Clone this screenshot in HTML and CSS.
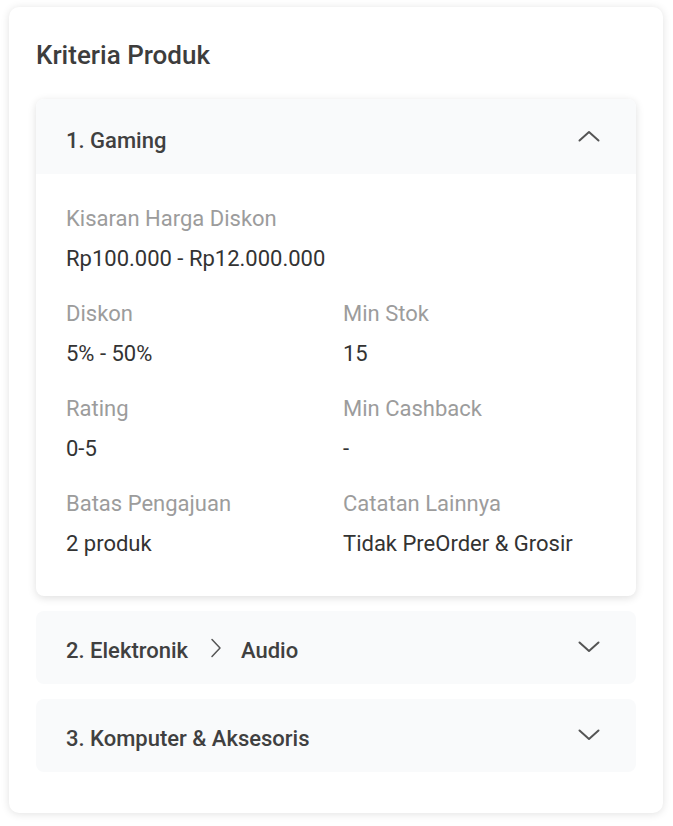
FILE: index.html
```html
<!DOCTYPE html>
<html lang="id">
<head>
  <meta charset="UTF-8" />
  <meta name="viewport" content="width=device-width, initial-scale=1" />
  <title>Kriteria Produk</title>
  <link rel="stylesheet" href="styles.css">
</head>
<body>
  <div class="kartu">
    <h2 class="judul">Kriteria Produk</h2>

    <div class="daftar">
      <div class="kategori terbuka">
        <div class="kepala">
          <span class="nama">1. Gaming</span>
          <svg class="panah" width="22" height="12" viewBox="0 0 22 12"><path d="M1.5 10.5 L11 2 L20.5 10.5" fill="none" stroke="#555" stroke-width="2" stroke-linecap="round" stroke-linejoin="round"/></svg>
        </div>
        <div class="isi">
          <div class="item penuh">
            <div class="label">Kisaran Harga Diskon</div>
            <div class="nilai">Rp100.000 - Rp12.000.000</div>
          </div>
          <div class="item">
            <div class="label">Diskon</div>
            <div class="nilai">5% - 50%</div>
          </div>
          <div class="item">
            <div class="label">Min Stok</div>
            <div class="nilai">15</div>
          </div>
          <div class="item">
            <div class="label">Rating</div>
            <div class="nilai">0-5</div>
          </div>
          <div class="item">
            <div class="label">Min Cashback</div>
            <div class="nilai">-</div>
          </div>
          <div class="item">
            <div class="label">Batas Pengajuan</div>
            <div class="nilai">2 produk</div>
          </div>
          <div class="item">
            <div class="label">Catatan Lainnya</div>
            <div class="nilai">Tidak PreOrder &amp; Grosir</div>
          </div>
        </div>
      </div>

      <div class="kategori">
        <div class="kepala">
          <span class="nama">2. Elektronik
            <svg class="pemisah" width="14" height="20" viewBox="0 0 14 20"><path d="M3 1.5 L11 10 L3 18.5" fill="none" stroke="#555" stroke-width="1.5" stroke-linecap="round" stroke-linejoin="round"/></svg>
            Audio</span>
          <svg class="panah" width="22" height="12" viewBox="0 0 22 12"><path d="M1.5 1.5 L11 10 L20.5 1.5" fill="none" stroke="#555" stroke-width="2" stroke-linecap="round" stroke-linejoin="round"/></svg>
        </div>
      </div>

      <div class="kategori">
        <div class="kepala">
          <span class="nama">3. Komputer &amp; Aksesoris</span>
          <svg class="panah" width="22" height="12" viewBox="0 0 22 12"><path d="M1.5 1.5 L11 10 L20.5 1.5" fill="none" stroke="#555" stroke-width="2" stroke-linecap="round" stroke-linejoin="round"/></svg>
        </div>
      </div>
    </div>
  </div>
</body>
</html>
```

FILE: styles.css
```css
body {
  font-family: Roboto, "Noto Sans", Arial, sans-serif;
  margin: 0;
  padding: 0;
  background-color: #fff;
}

.kartu {
  margin: 7px 10px 14px 9px;
  padding: 33px 27px 41px;
  background-color: #fff;
  border-radius: 10px;
  box-shadow: 0 1px 8px rgba(0, 0, 0, 0.12);
}

.judul {
  margin: 0 0 29px;
  font-size: 26px;
  line-height: 30px;
  font-weight: 500;
  color: #3d3d3d;
}

.daftar {
  display: flex;
  flex-direction: column;
  gap: 15px;
}

.kategori {
  background-color: #f9fafb;
  border-radius: 8px;
  overflow: hidden;
}

.kategori.terbuka {
  background-color: #fff;
  box-shadow: 0 2px 8px rgba(0, 0, 0, 0.13);
}

.kepala {
  display: flex;
  align-items: center;
  justify-content: space-between;
  height: 73px;
  padding: 0 36px 0 30px;
  background-color: #f9fafb;
}

.terbuka .kepala {
  height: 75px;
}

.nama {
  display: flex;
  align-items: center;
  font-size: 22px;
  font-weight: 500;
  color: #404040;
  padding-top: 5px;
}

.terbuka .nama {
  padding-top: 8px;
}

.pemisah {
  margin: -5px 18px 0 21px;
}

.panah {
  margin-top: -2px;
}

.isi {
  display: grid;
  grid-template-columns: 277px 1fr;
  row-gap: 31px;
  padding: 33px 30px 40px;
}

.item.penuh {
  grid-column: 1 / -1;
}

.label {
  font-size: 22px;
  line-height: 24px;
  color: #9c9c9c;
  margin-bottom: 16px;
}

.nilai {
  font-size: 22px;
  line-height: 24px;
  color: #333;
}
```
